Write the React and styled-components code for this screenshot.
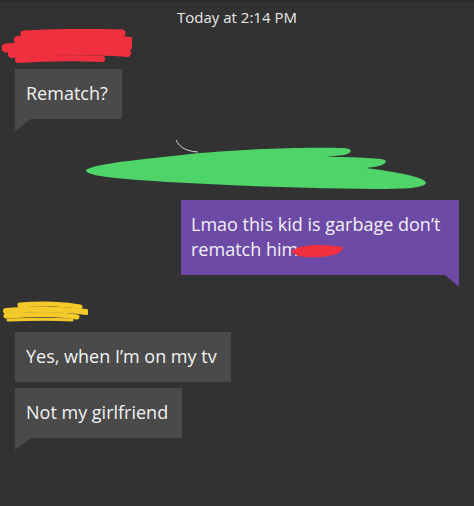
import React from 'react';
import styled, { createGlobalStyle } from 'styled-components';

const Global = createGlobalStyle`
  html, body { margin: 0; padding: 0; background: #323232; }
  body { font-family: "Open Sans", "Noto Sans", sans-serif; }
`;

const Screen = styled.div`
  width: 474px;
  height: 506px;
  background: #323232;
  border-top: 2px solid #2a2a2a;
  box-sizing: border-box;
  display: flex;
  flex-direction: column;
  overflow: hidden;
`;

const Stamp = styled.div`
  text-align: center;
  color: #e8e8e8;
  font-size: 15px;
  line-height: 20px;
  margin-top: 5px;
`;

const Scribble = styled.svg`
  display: block;
  margin-left: ${p => p.$left}px;
  margin-top: ${p => p.$top}px;
  flex-shrink: 0;
`;

const Row = styled.div`
  display: flex;
  justify-content: ${p => (p.$mine ? 'flex-end' : 'flex-start')};
  padding: 0 ${p => (p.$mine ? 15 : 0)}px 0 ${p => (p.$mine ? 0 : 15)}px;
  margin-top: ${p => p.$top}px;
`;

const Bubble = styled.div`
  position: relative;
  background: ${p => (p.$mine ? '#6e4aa7' : '#4a4a4a')};
  color: #f2f2f2;
  font-size: 18px;
  line-height: 25px;
  padding: ${p => (p.$mine ? '12px 10px 13px 10px' : '12px 14px 13px 11px')};
  width: ${p => (p.$w ? `${p.$w}px` : 'auto')};
  box-sizing: border-box;
  margin-bottom: ${p => (p.$tail ? 12 : 0)}px;

  &::after {
    content: '';
    display: ${p => (p.$tail ? 'block' : 'none')};
    position: absolute;
    top: 100%;
    ${p => (p.$mine ? 'right: 0;' : 'left: 0;')}
    width: 0;
    height: 0;
    border-top: 12px solid ${p => (p.$mine ? '#6e4aa7' : '#4a4a4a')};
    ${p => (p.$mine ? 'border-left: 14px solid transparent;' : 'border-right: 16px solid transparent;')}
  }
`;

const Hidden = styled.svg`
  display: inline-block;
  vertical-align: middle;
  margin-left: -9px;
`;

function RedName() {
  return (
    <Scribble $left={2} $top={2} width="130" height="36" viewBox="0 0 130 36">
      <g stroke="#f0303e" strokeLinecap="round" fill="none">
        <path d="M22 5 C60 3, 95 3, 120 4" strokeWidth="7" />
        <path d="M16 11 C55 9, 100 8, 128 12" strokeWidth="8" />
        <path d="M4 19 C45 16, 95 15, 126 17" strokeWidth="9" />
        <path d="M10 25 C50 22, 100 22, 125 24" strokeWidth="8" />
        <path d="M16 31 C45 29, 80 29, 100 30" strokeWidth="6" />
      </g>
    </Scribble>
  );
}

function GreenName() {
  return (
    <Scribble $left={86} $top={8} width="342" height="54" viewBox="0 0 342 54">
      <path d="M90 1 C94 9, 100 12, 112 13" stroke="#cfd8cf" strokeWidth="1" fill="none" />
      <path
        d="M0 31 C10 24, 60 20, 114 14 C170 9, 230 8, 258 9 C268 10, 266 14, 258 16 L240 18 C270 18, 300 19, 300 22 C300 26, 290 28, 280 29 C310 33, 340 38, 340 44 C338 49, 320 50, 290 50 C200 49, 100 45, 40 40 C10 37, 0 35, 0 31 Z"
        fill="#4fd46a"
      />
    </Scribble>
  );
}

function YellowName() {
  return (
    <Scribble $left={2} $top={14} width="86" height="22" viewBox="0 0 86 22">
      <g stroke="#f4c92a" strokeLinecap="round" fill="none">
        <path d="M18 4 C40 2, 65 3, 78 6" strokeWidth="5" />
        <path d="M4 10 C30 8, 65 8, 84 11" strokeWidth="6" />
        <path d="M4 15 C30 13, 60 13, 75 16" strokeWidth="5" />
        <path d="M6 19 C30 18, 55 18, 70 19" strokeWidth="3" />
      </g>
    </Scribble>
  );
}

export default function App() {
  return (
    <>
      <Global />
      <Screen>
        <Stamp>Today at 2:14 PM</Stamp>
        <RedName />
        <Row $top={4}>
          <Bubble $tail>Rematch?</Bubble>
        </Row>
        <GreenName />
        <Row $mine $top={7}>
          <Bubble $mine $tail $w={278}>
            Lmao this kid is garbage don’t rematch him
            <Hidden width="56" height="18" viewBox="0 0 56 18">
              <path
                d="M2 9 C10 3, 30 1, 54 5 C54 11, 44 14, 32 15 C18 16, 6 15, 2 9 Z"
                fill="#f0303e"
              />
            </Hidden>
          </Bubble>
        </Row>
        <YellowName />
        <Row $top={9}>
          <Bubble>Yes, when I’m on my tv</Bubble>
        </Row>
        <Row $top={6}>
          <Bubble $tail>Not my girlfriend</Bubble>
        </Row>
      </Screen>
    </>
  );
}
